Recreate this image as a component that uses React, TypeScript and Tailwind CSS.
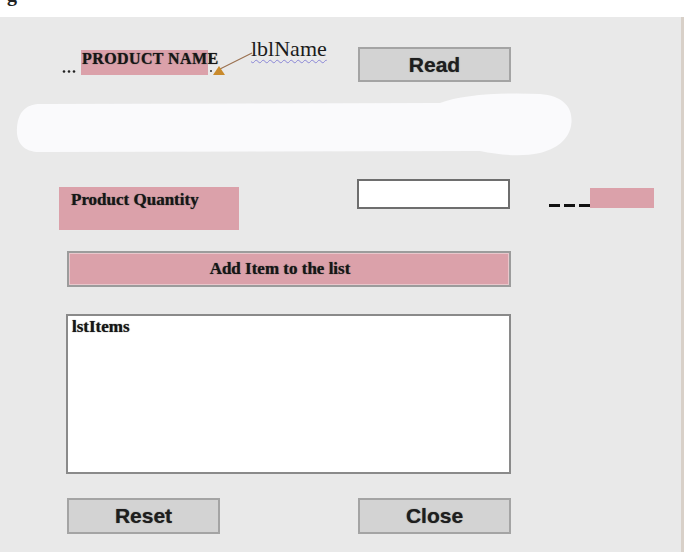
import React from "react";

const serif = { fontFamily: '"Liberation Serif", "Times New Roman", serif' };
const sans = { fontFamily: '"Liberation Sans", Arial, sans-serif' };

function WinButton({ label, className }: { label: string; className: string }) {
  return (
    <div
      className={`flex items-center justify-center bg-[#d3d3d3] border-2 border-[#a4a4a4] text-[21px] font-bold text-[#1e1e1e] [text-shadow:0_0_1px_#555] ${className}`}
      style={sans}
    >
      {label}
    </div>
  );
}

export default function App() {
  return (
    <div className="relative w-[688px] h-[558px] bg-white overflow-hidden">
      <div className="h-[17px] relative">
        <span
          className="absolute left-[7px] top-[-16px] text-[20px] font-bold text-[#222] leading-[20px]"
          style={serif}
        >
          g
        </span>
      </div>
      <div className="w-[684px] h-[535px] bg-[#e9e9e9] border-r-[3px] border-[#d8d0c8] flex flex-col">
        {/* Row 1 */}
        <div className="relative flex items-start h-[35px] mt-[30px]">
          <div
            className="ml-[81px] mt-[3px] w-[127px] h-[25px] bg-[#dba1aa] text-[16px] leading-[16px] font-bold text-[#161616] whitespace-nowrap pl-[1px] pt-[1px] tracking-[0.4px] [text-shadow:0_0_1px_#444]"
            style={serif}
          >
            PRODUCT NAME
          </div>
          <WinButton label="Read" className="ml-[150px] w-[153px] h-[35px]" />
          <span
            className="absolute left-[251px] top-[-9px] text-[22px] leading-[22px] text-[#1b1b1b] underline decoration-wavy decoration-[#8a86d6] decoration-1 underline-offset-[3px]"
            style={serif}
          >
            lblName
          </span>
        </div>

        {/* Blob */}
        <svg className="mt-[9px] block" width="600" height="68" viewBox="0 0 600 68">
          <path
            d="M 40 13 L 440 12 C 460 4, 500 1, 540 3 C 565 5, 574 18, 571 35 C 568 50, 555 58, 540 62 C 520 66, 500 64, 480 60 L 40 61 C 22 61, 16 50, 17 37 C 18 22, 25 13, 40 13 Z"
            fill="#fafafc"
          />
        </svg>

        {/* Row 3 */}
        <div className="flex items-start mt-[20px]">
          <div
            className="ml-[59px] mt-[8px] w-[180px] h-[43px] bg-[#dba1aa] text-[17px] leading-[17px] font-bold text-[#161616] pl-[12px] pt-[4px] [text-shadow:0_0_1px_#444]"
            style={serif}
          >
            Product Quantity
          </div>
          <div className="ml-[118px] w-[153px] h-[30px] bg-white border-2 border-[#6e6e6e]" />
          <div className="ml-[39px] mt-[25px] flex gap-[4px]">
            <div className="w-[11px] h-[3px] bg-[#111]" />
            <div className="w-[11px] h-[3px] bg-[#111]" />
            <div className="w-[11px] h-[3px] bg-[#111]" />
          </div>
          <div className="mt-[9px] w-[64px] h-[20px] bg-[#dba1aa]" />
        </div>

        {/* Add item */}
        <div className="ml-[67px] mt-[21px] w-[444px] h-[36px] border-2 border-[#9c9c9c] bg-[#dba1aa] flex">
          <div
            className="flex-1 border border-[#e9c7cc] flex items-center justify-center pr-[18px] text-[17px] font-bold text-[#161616] [text-shadow:0_0_1px_#444]"
            style={serif}
          >
            Add Item to the list
          </div>
        </div>

        {/* List */}
        <div
          className="ml-[66px] mt-[27px] w-[445px] h-[160px] bg-white border-2 border-[#8a8a8a] pl-[4px] pt-[2px] text-[17px] leading-[17px] font-bold text-[#161616] [text-shadow:0_0_1px_#444]"
          style={serif}
        >
          lstItems
        </div>

        {/* Buttons */}
        <div className="flex mt-[24px]">
          <WinButton label="Reset" className="ml-[67px] w-[153px] h-[36px]" />
          <WinButton label="Close" className="ml-[138px] w-[153px] h-[36px]" />
        </div>
      </div>

      {/* annotation overlay */}
      <svg className="absolute left-0 top-0 pointer-events-none" width="688" height="558">
        <circle cx="64" cy="71.5" r="1.3" fill="#222" />
        <circle cx="69" cy="71.5" r="1.3" fill="#222" />
        <circle cx="74" cy="71.5" r="1.3" fill="#222" />
        <circle cx="211" cy="71" r="1" fill="#333" />
        <line x1="220" y1="69" x2="252" y2="53" stroke="#9a7050" strokeWidth="1.2" />
        <polygon points="213,75 219,66 225,75" fill="#c98a2c" />
      </svg>
    </div>
  );
}
